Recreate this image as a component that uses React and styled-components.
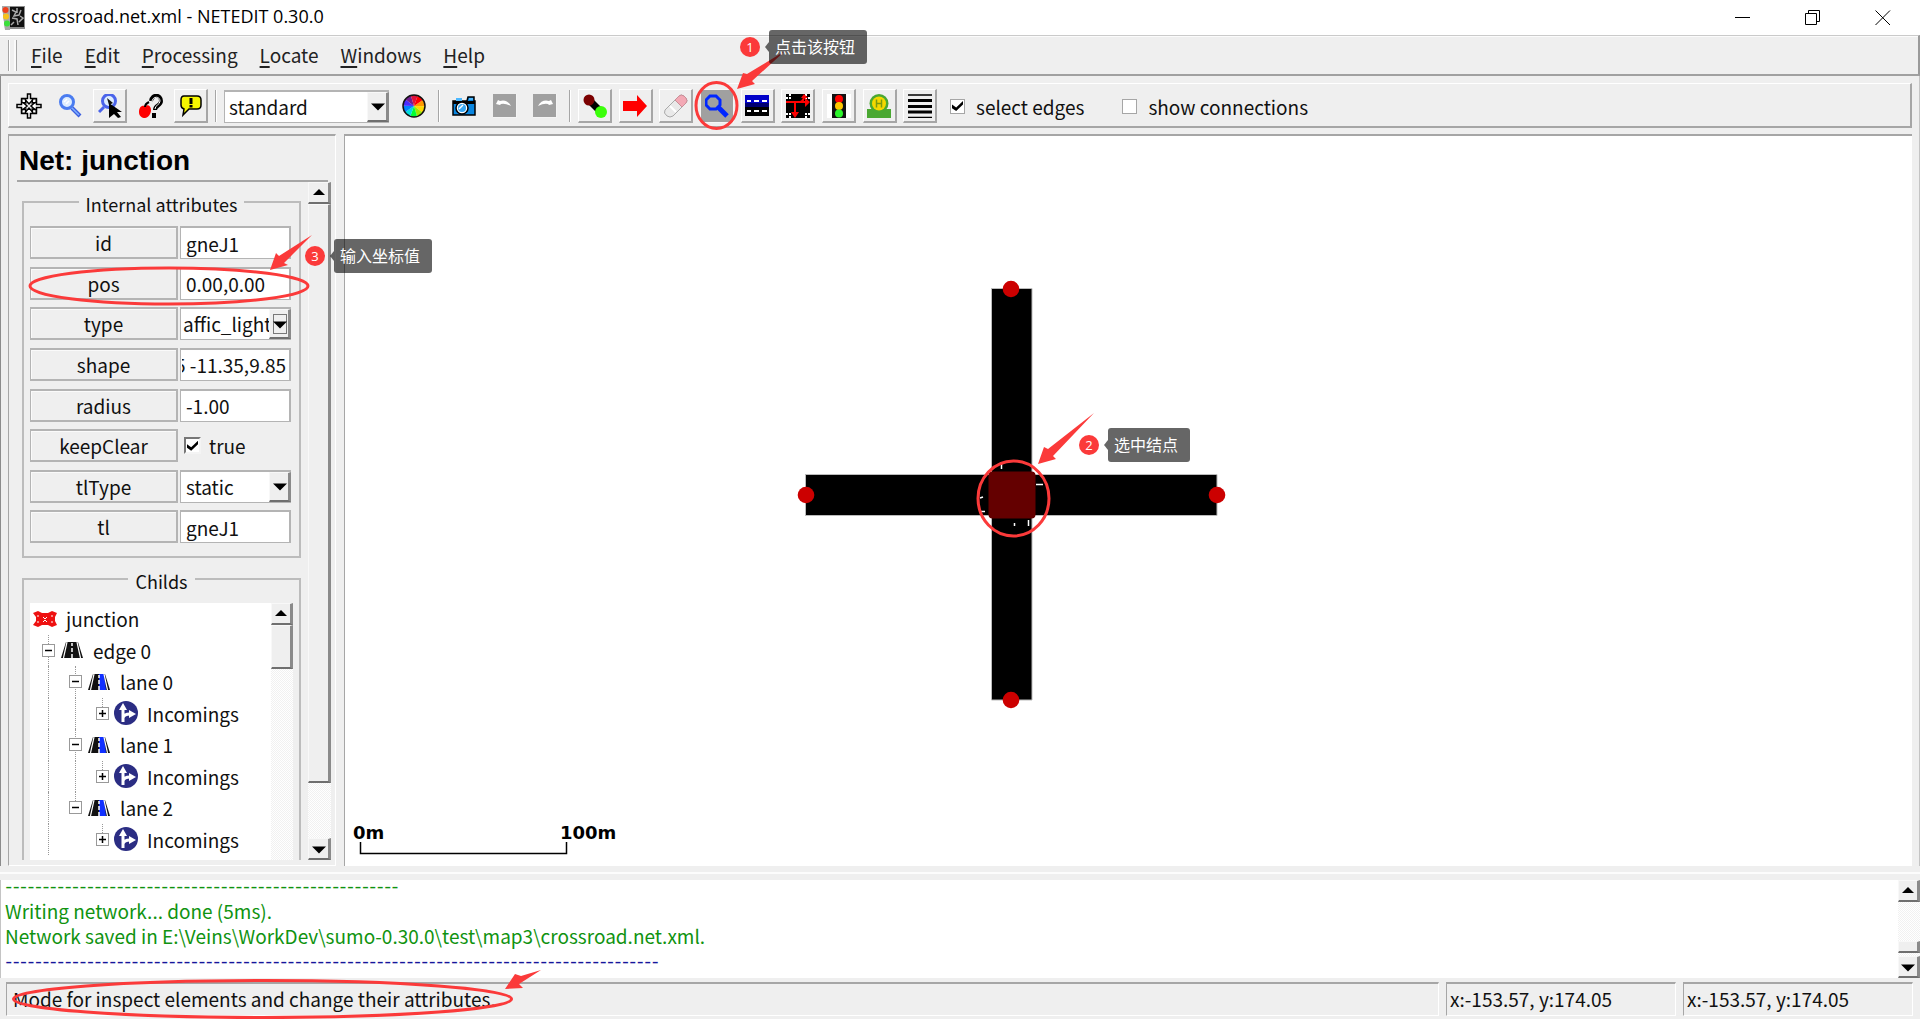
import React from 'react';
import styled, { createGlobalStyle, css } from 'styled-components';

const face = '#efefef';
const shade = '#a6a6a6';
const dark = '#6f6f6f';
const mark = '#fb3a3a';

const GlobalStyle = createGlobalStyle`
  * { box-sizing: border-box; }
  body {
    margin: 0;
    background: ${face};
    color: #111;
    font: 19px/25px 'Noto Sans CJK SC', 'Open Sans', sans-serif;
  }
  button, input, select { font: inherit; color: inherit; margin: 0; }
`;

/* ---------- shared bevels ---------- */

const raised = css`
  border: 1px solid #fff;
  border-right: 2px solid ${shade};
  border-bottom: 2px solid ${shade};
`;

const raisedDark = css`
  border: 1px solid #f8f8f8;
  border-right: 3px solid #8a8a8a;
  border-bottom: 2px solid ${dark};
`;

const sunken = css`
  border: 2px solid #b4b4b4;
  border-left-width: 1px;
  border-bottom-width: 1px;
`;

/* ---------- window ---------- */

const Window = styled.div`
  position: relative;
  display: flex;
  flex-direction: column;
  min-height: 100vh;
  overflow: hidden;
  background: ${face};
`;

const TitleBar = styled.header`
  display: flex;
  align-items: center;
  height: 35px;
  padding: 0 2px;
  background: #fff;
`;

const TitleText = styled.h1`
  flex: 1;
  margin: 0 0 0 5px;
  padding-bottom: 2px;
  font: 400 18px/25px 'Open Sans', sans-serif;
  color: #000;
`;

const WindowButton = styled.button`
  display: grid;
  place-items: center;
  width: 70px;
  height: 33px;
  padding: 0;
  border: 0;
  background: none;
`;

const MenuBar = styled.nav`
  display: flex;
  align-items: center;
  height: 41px;
  padding: 0 8px;
  border-top: 1px solid #cacaca;
  border-right: 2px solid #9a9a9a;
  border-bottom: 2px solid #a0a0a0;
  box-shadow: inset 0 1px #fbfbfb;
`;

const Grip = styled.span`
  width: 9px;
  height: 31px;
  margin-right: 3px;
  border: solid ${shade};
  border-width: 0 1px;
  box-shadow: inset 1px 0 #fff, inset -2px 0 #fafafa;
`;

const MenuButton = styled.button`
  padding: 0 11px;
  border: 0;
  background: none;
  line-height: 30px;
  color: #222;

  & > u { text-underline-offset: 3px; text-decoration-thickness: 2px; text-decoration-skip-ink: none; }
`;

/* ---------- tool bar ---------- */

const Workspace = styled.div`
  flex: 1;
  display: flex;
  flex-direction: column;
  gap: 6px;
  padding: 7px 7px 0;
  border-left: 1px solid #8c8c8c;
  border-right: 1px solid #c4c4c4;
`;

const ToolFrame = styled.div`
  display: flex;
  align-items: center;
  height: 45px;
  padding: 3px 3px 1px;
  border: 1px solid #fff;
  border-right: 2px solid ${shade};
  border-bottom: 2px solid ${shade};
`;

const ToolGroup = styled.div`
  display: grid;
  grid-template-columns: repeat(${(p) => p.$count}, 1fr);
  width: ${(p) => p.$width}px;
`;

const ToolButton = styled.button`
  display: grid;
  place-items: center;
  width: 34px;
  height: 34px;
  padding: 0;
  background: none;
  border: 0;
  ${(p) => p.$look === 'raised' && raised}
  ${(p) => p.$look === 'pressed' && css`background: #a0a0a0; border: 1px solid #f6f6f6;`}
`;

const Divider = styled.span`
  width: 2px;
  height: 32px;
  margin-right: 7px;
  background: linear-gradient(90deg, ${shade} 50%, #fff 50%);
`;

const WheelSlot = styled.div`
  margin: 0 7px 0 8px;
`;

const CheckLabel = styled.label`
  display: flex;
  align-items: center;
  gap: ${(p) => p.$gap || 11}px;
  margin-left: ${(p) => p.$lead || 0}px;
`;

const CheckBox = styled.input`
  appearance: none;
  display: grid;
  place-items: center;
  width: ${(p) => (p.$deep ? 17 : 15)}px;
  height: ${(p) => (p.$deep ? 17 : 15)}px;
  background: #fff;
  border: 1px solid ${shade};
  ${(p) => p.$deep && css`border: 2px solid #777; border-right-color: #f4f4f4; border-bottom-color: #f4f4f4;`}

  &:checked::after {
    content: '';
    width: 11px;
    height: 10px;
    background: #000;
    clip-path: polygon(0 35%, 38% 65%, 100% 0, 100% 35%, 38% 100%, 0 72%);
  }
`;

/* ---------- combo box ---------- */

const ComboBox = styled.div`
  display: grid;
  grid-template-columns: 1fr 22px;
  width: ${(p) => p.$width}px;
  height: 33px;
  background: #fff;
  ${sunken}
  border-right-width: 0;
`;

const ComboSelect = styled.select`
  grid-area: 1 / 1 / 2 / 3;
  appearance: none;
  min-width: 0;
  width: 100%;
  padding: 0 0 0 ${(p) => p.$pad}px;
  border: 0;
  outline: 0;
  background: transparent;
  line-height: 28px;
`;

const ComboArrow = styled.span`
  grid-area: 1 / 2;
  display: grid;
  place-items: center;
  padding-left: 2px;
  background: ${face};
  pointer-events: none;
  ${raisedDark}
`;

/* ---------- side panel ---------- */

const Main = styled.main`
  flex: 1;
  display: grid;
  grid-template-columns: 328px 1fr;
  gap: 8px;
`;

const Side = styled.aside`
  display: flex;
  flex-direction: column;
  padding: 0 4px 5px 8px;
  border: 1px solid ${shade};
  border-top-width: 2px;
  border-right-color: #fff;
  border-bottom-color: #fff;
`;

const SideTitle = styled.h2`
  margin: 0 3px 0 0;
  padding: 8px 0 2px 2px;
  border-bottom: 2px solid ${shade};
  font: bold 28px/34px 'Liberation Sans', Arial, sans-serif;
  color: #000;
`;

const SideBody = styled.div`
  flex: 1 1 0px;
  display: flex;
  justify-content: space-between;
  min-height: 640px;
  overflow: hidden;
`;

const Groups = styled.div`
  display: flex;
  flex-direction: column;
  gap: 7px;
  width: 284px;
  padding: 6px 0 0 5px;
  overflow: hidden;
`;

const Group = styled.fieldset`
  flex: none;
  min-width: 0;
  margin: 0;
  padding: 10px 6px 5px;
  border: 2px solid #bcbcbc;
`;

const GroupTitle = styled.legend`
  margin: 0 auto;
  padding: 4px 7px 0;
  font-size: 18px;
  line-height: 24px;
`;

const Fields = styled.div`
  display: grid;
  grid-template-rows: repeat(8, 1fr);
  height: 325px;
`;

const Field = styled.div`
  display: grid;
  grid-template-columns: 148px 111px;
  gap: 2px;
  height: 33px;
`;

const FieldName = styled.label`
  text-align: center;
  line-height: 29px;
  border: 2px solid #b4b4b4;
  border-left-width: 1px;
  box-shadow: inset 1px 1px #fafafa;
`;

const FieldInput = styled.input`
  min-width: 0;
  width: 111px;
  padding: 0 3px;
  padding-left: ${(p) => (p.$scrolled ? 1 : 5)}px;
  text-indent: ${(p) => (p.$scrolled ? -7 : 0)}px;
  line-height: 29px;
  background: #fff;
  outline: 0;
  ${sunken}
`;

/* ---------- scroll bars ---------- */

const Scroll = styled.div`
  flex: none;
  display: flex;
  flex-direction: column;
  width: ${(p) => p.$width || 23}px;
  background: repeating-conic-gradient(#fff 0 25%, #f1f1f1 0 50%) 0 0 / 2px 2px;
`;

const ScrollButton = styled.button`
  display: grid;
  place-items: center;
  height: 22px;
  padding: 0;
  background: ${face};
  ${raisedDark}
`;

const ScrollSpace = styled.span`
  flex: ${(p) => p.$grow} 0 0;
`;

const ScrollThumb = styled.span`
  flex: ${(p) => p.$grow} 0 0;
  background: ${face};
  ${raisedDark}
`;

/* ---------- tree ---------- */

const TreeBox = styled.div`
  display: flex;
  height: 262px;
  background: #fff;
`;

const TreeList = styled.ul`
  flex: 1;
  display: grid;
  grid-template-rows: repeat(8, 1fr);
  height: 252px;
  margin: 0;
  padding: 0;
  list-style: none;
`;

const TreeRow = styled.li`
  position: relative;
  display: flex;
  align-items: center;
  padding-left: ${(p) => (p.$level ? 12 + 27 * (p.$level - 1) : 3)}px;
`;

const Guide = styled.span`
  position: absolute;
  left: ${(p) => 18 + 27 * (p.$level - 1)}px;
  top: 0;
  height: ${(p) => (p.$short ? '30%' : '100%')};
  border-left: 1px dotted #999;
`;

const Toggle = styled.button`
  position: relative;
  display: grid;
  place-items: center;
  width: 13px;
  height: 13px;
  margin-right: 5px;
  padding: 0;
  background: #fff;
  border: 1px solid #999;
`;

const TreeIcon = styled.span`
  display: grid;
  place-items: center;
  width: 24px;
  margin-right: 9px;
`;

/* ---------- canvas ---------- */

const Canvas = styled.section`
  display: flex;
  background: #fff;
  border: 1px solid ${shade};
  border-top-width: 2px;
  border-right: 0;
  border-bottom: 0;
`;

const Drawing = styled.svg`
  flex: 1;
  width: 100%;
  font: bold 18px 'DejaVu Sans', sans-serif;
`;

/* ---------- log and status ---------- */

const Splitter = styled.div`
  height: 14px;
  background: linear-gradient(${face} 6px, #fcfcfc 6px, #fcfcfc 8px, ${face} 8px);
`;

const Log = styled.section`
  display: flex;
  height: 98px;
  background: #fff;
  border-left: 1px solid #c4c4c4;
`;

const LogText = styled.div`
  flex: 1;
  display: flex;
  flex-direction: column;
  justify-content: flex-end;
  padding: 0 4px 5px;
`;

const LogLine = styled.p`
  flex: none;
  margin: 0;
  white-space: pre;
  color: ${(p) => (p.$tone === 'blue' ? '#16169c' : '#109310')};
  ${(p) => p.$rule && css`font-family: Lato, 'Open Sans', sans-serif; font-size: 20px;`}
`;

const StatusBar = styled.footer`
  display: grid;
  grid-template-columns: 1fr 230px 230px;
  gap: 7px;
  height: 41px;
  padding: 4px 7px 3px 6px;
`;

const StatusCell = styled.div`
  padding-left: ${(p) => (p.$wide ? 6 : 3)}px;
  border: 1px solid #fff;
  border-top: 2px solid ${shade};
  border-left: 1px solid ${shade};
  line-height: 29px;
  white-space: nowrap;
`;

/* ---------- annotations ---------- */

const Marks = styled.svg`
  position: absolute;
  left: 0;
  top: 0;
  width: 100%;
  height: 100%;
  pointer-events: none;
`;

const Callout = styled.div`
  position: absolute;
  left: ${(p) => p.$x}px;
  top: ${(p) => p.$y}px;
  display: flex;
  align-items: center;
  font: 16px/34px 'Noto Sans CJK SC', sans-serif;
  color: #fff;
`;

const CalloutNumber = styled.span`
  width: 20px;
  height: 20px;
  margin-right: 5px;
  border-radius: 50%;
  background: ${mark};
  font: 13px/20px 'Open Sans', sans-serif;
  text-align: center;
`;

const CalloutText = styled.span`
  display: flex;
  align-items: center;

  &::before {
    content: '';
    border: solid transparent;
    border-width: 5px 4px 5px 0;
    border-right-color: rgba(0, 0, 0, 0.6);
  }

  & > span {
    height: 34px;
    padding: 0 12px 0 6px;
    border-radius: 3px;
    background: rgba(0, 0, 0, 0.6);
    line-height: 32px;
  }
`;

/* ---------- icons ---------- */

const Icon = ({ size = 24, children, box = 24 }) => (
  <svg width={size} height={size} viewBox={`0 0 ${box} ${box}`} aria-hidden="true">{children}</svg>
);

const AppIcon = () => (
  <Icon>
    <path d="M0 0h23v23H3z" fill="#8d8d8d" />
    <path d="M8 1h14v20H8z" fill="#111" />
    <path d="M10 4l4 2-2 4 5-1 2-5M10 12l5 1 1 6M18 10l3 2-4 4M12 16l-3 3M15 2v5" stroke="#aaa" strokeWidth="1.5" fill="none" />
    <path d="M0 0h8v24H3z" fill="#a9a9a9" />
    <circle cx="3.500" cy="4" r="3" fill="#f0401c" />
    <circle cx="4" cy="10.500" r="3" fill="#f6c21c" />
    <circle cx="5" cy="17.500" r="3" fill="#3be03b" />
  </Icon>
);

const MoveIcon = () => (
  <Icon size={26} box={26}>
    {[0, 90, 180, 270].map((a) => (
      <path key={a} transform={`rotate(${a} 13 13)`} d="M11.500 1h3v4.500h3.500l-5 5.500-5-5.500h3.500z" fill="#fff" stroke="#000" strokeWidth="1.500" />
    ))}
    {[45, 135, 225, 315].map((a) => (
      <path key={a} transform={`rotate(${a} 13 13)`} d="M13 2.500l2.500 3-2.500 3-2.500-3z" fill="#fff" stroke="#000" strokeWidth="1.500" />
    ))}
  </Icon>
);

const ZoomIcon = () => (
  <Icon>
    <path d="M14 14l8 8" stroke="#3c5fe0" strokeWidth="4" />
    <path d="M14 14l7 7" stroke="#7fb0ff" strokeWidth="1.500" />
    <circle cx="9" cy="8" r="6.500" fill="#dcecff" stroke="#4a7cf0" strokeWidth="3" />
    <path d="M6 8l3-3M8 10l3-3" stroke="#fff" strokeWidth="1.500" />
  </Icon>
);

const ZoomPickIcon = () => (
  <Icon>
    <path d="M6 13l-5 5" stroke="#4a63ea" strokeWidth="3" />
    <circle cx="11" cy="7" r="6.500" fill="#dcecff" stroke="#4a63ea" strokeWidth="3" />
    <path d="M9 4l6 5-4 2z" fill="#111" />
    <path d="M11 9l13 9h-5l4 5-3 1-4-4-5 4z" fill="#000" />
  </Icon>
);

const HelpIcon = () => (
  <Icon>
    <path d="M12 7c1-7 10-7 10 0 0 5-6 4-6 9" fill="none" stroke="#000" strokeWidth="4" />
    <path d="M13 7c1-5 8-5 8 0 0 4-5 4-5 8" fill="none" stroke="#fff" strokeWidth="1" />
    <path d="M13 19h4v5h-4z" fill="#000" />
    <path d="M6 12c3-2 6 0 6 4s-3 8-6 8-6-2-6-6 2-7 6-6z" fill="#f00" />
    <path d="M6 13c0-3 2-4 4-5" stroke="#000" strokeWidth="2" fill="none" />
  </Icon>
);

const TipIcon = () => (
  <Icon>
    <path d="M5 2h13q4 0 4 4v5q0 4-4 4h-8l-6 6 1-6q-3-1-3-4V6q0-4 3-4z" fill="#f6f600" stroke="#000" strokeWidth="1.500" />
    <path d="M12 4v6M12 11v2.500" stroke="#000" strokeWidth="3" />
  </Icon>
);

const wheel = ['#ff9a00', '#ffd800', '#9be800', '#0f3', '#0dd', '#0084ff', '#4a2bff', '#701a90', '#e0103a', '#f00'];
const WheelIcon = () => (
  <Icon>
    {wheel.map((c, i) => {
      const p = (k) => {
        const a = (k / wheel.length) * Math.PI * 2 - 0.6;
        return `${12 + 11 * Math.cos(a)} ${12 + 11 * Math.sin(a)}`;
      };
      return <path key={c} d={`M12 12L${p(i)}A11 11 0 0 1 ${p(i + 1)}z`} fill={c} />;
    })}
    <circle cx="12" cy="12" r="11" fill="none" stroke="#111" strokeWidth="1.500" />
  </Icon>
);

const CameraIcon = () => (
  <Icon>
    <path d="M1 7h14l1-4h6v4h1v14H1z" fill="#0a86e0" stroke="#000" strokeWidth="1.500" />
    <path d="M1 7h22v3H1z" fill="#000" />
    <path d="M4 4h6v3H4zM17 4h4v2h-4z" fill="#4bb8ff" />
    <circle cx="10" cy="14" r="6" fill="#fff" stroke="#000" strokeWidth="1.500" />
    <circle cx="10" cy="14" r="4" fill="#39a7f2" />
    <path d="M7 15l4-4" stroke="#fff" strokeWidth="1.500" />
  </Icon>
);

const HistoryIcon = ({ redo }) => (
  <Icon>
    <path d="M0 0h24v24H0z" fill="#a0a0a0" />
    <path d="M0 24h24V0" fill="none" stroke="#f4f4f4" strokeWidth="2" />
    <path transform={redo ? 'translate(23 0) scale(-1 1)' : undefined} d="M3 10l2-4 2 1q7-2 11 5-6-3-10-2l-1 1z" fill="#fff" />
  </Icon>
);

const CreateIcon = () => (
  <Icon>
    <path d="M8 8l9 9" stroke="#000" strokeWidth="7" />
    <circle cx="6" cy="6" r="5.500" fill="#7b0000" />
    <circle cx="18" cy="18" r="6" fill="#3bff0a" />
  </Icon>
);

const EdgeIcon = () => <Icon><path d="M0 7h14V1l10 11-10 11v-6H0z" fill="#f00" /></Icon>;

const EraserIcon = () => (
  <Icon>
    <path d="M1 16L15 2q2-2 5 0l2 2q2 3 0 5L9 22q-3 2-6 0-4-3-2-6z" fill="#e9e9e9" stroke="#a9a9a9" />
    <path d="M11 6l4-4q2-2 5 0l2 2q2 3 0 5l-4 4z" fill="#f3a9b5" stroke="#c98f98" />
    <path d="M6 12l6 6" stroke="#fff" strokeWidth="2" />
  </Icon>
);

const InspectIcon = () => (
  <Icon>
    <path d="M5 2h6l4 4v5l-4 4H5l-4-4V6z" fill="none" stroke="#0026ff" strokeWidth="3" />
    <path d="M13 13l9 9" stroke="#0026ff" strokeWidth="5" />
  </Icon>
);

const RoadIcon = () => (
  <Icon>
    <path d="M0 1h24v12H0z" fill="#0000c8" />
    <path d="M0 9h24v4H0z" fill="#000070" />
    <path d="M0 13h24v9H0z" fill="#000" />
    <path d="M2 7h4M9 7h5M17 7h5M2 17h4M9 17h5M17 17h5" stroke="#fff" strokeWidth="2" />
  </Icon>
);

const ConnectIcon = () => (
  <Icon>
    <path d="M0 0h24v24H0z" fill="#000" />
    <path d="M0 4h4V0M20 0v4h4M0 20h4v4M24 20h-4v4" fill="none" stroke="#fff" strokeWidth="2" strokeDasharray="2 1" />
    <path d="M0 8h22M9 8v13M14 8q4-1 4-6" stroke="#f00" strokeWidth="2" fill="none" />
    <path d="M19 4l5 4-5 5zM5 18h8l-4 6zM15 4l3-4 4 4z" fill="#f00" />
  </Icon>
);

const LightIcon = () => (
  <Icon>
    <path d="M0 0h24v24H0z" fill="#fff" />
    <path d="M5 0h14v24H5z" fill="#111" />
    <circle cx="12" cy="5" r="4" fill="#f00" />
    <circle cx="12" cy="12" r="4" fill="#ffc800" />
    <circle cx="12" cy="19.500" r="4" fill="#2bf52b" />
  </Icon>
);

const StopIcon = () => (
  <Icon>
    <path d="M0 15h24v9H0z" fill="#4aa832" />
    <circle cx="12" cy="9.500" r="9.500" fill="#4aa832" />
    <circle cx="12" cy="9.500" r="7" fill="#f5d800" />
    <path d="M9.500 5.500v8M14.500 5.500v8M9.500 9.500h5" stroke="#7a9a10" strokeWidth="1.500" />
  </Icon>
);

const CrossingIcon = () => (
  <Icon>
    <path d="M0 1h24M0 23.500h24" stroke="#000" strokeWidth="1.500" />
    <path d="M0 6.500h24M0 12.500h24M0 18h24" stroke="#000" strokeWidth="3" />
  </Icon>
);

const Triangle = ({ up, focused }) => (
  <svg width="16" height="20" viewBox="0 0 16 20" aria-hidden="true">
    <path d={up ? 'M8 6l6 6H2z' : 'M8 14.500L1 7.500h14z'} fill="#000" />
    {focused && <rect x="1.500" y="0.500" width="13" height="19" fill="none" stroke="#000" strokeDasharray="1 1" />}
  </svg>
);

const JunctionIcon = () => (
  <svg width="24" height="16" viewBox="0 0 24 16" aria-hidden="true">
    <path d="M0 2l5-2 4 2h6l4-2 5 2-2 4v4l2 4-5 2-4-2H9l-4 2-5-2 3-4V6z" fill="#ee1111" />
    <path d="M10 6l2 2 2-2M10 11l2-2 2 2M4 5h2M18 5h2M4 11h2M18 11h2" stroke="#fff" strokeWidth="1" fill="none" />
  </svg>
);

const LaneIcon = ({ blue }) => (
  <svg width="22" height="16" viewBox="0 0 22 16" aria-hidden="true">
    <path d="M5 0h12l5 16H0z" fill="#111" />
    {blue && <path d="M11 0h5l2 16h-7z" fill="#1030ff" />}
    <path d="M6 0L2.500 16M16 0l3.500 16" stroke="#fff" strokeWidth="1.200" />
    <path d="M11 1v3M11 6v4M11 12v4" stroke="#fff" strokeWidth="1.500" />
  </svg>
);

const IncomingIcon = () => (
  <Icon>
    <circle cx="12" cy="12" r="12" fill="#2b2d83" />
    <path d="M9 21V8M9 17q1-4 7-4" stroke="#fff" strokeWidth="3" fill="none" />
    <path d="M9 2l4 7H5zM15 9l7 4-7 4z" fill="#fff" />
  </Icon>
);

/* ---------- data ---------- */

const menus = ['File', 'Edit', 'Processing', 'Locate', 'Windows', 'Help'];

const viewTools = [
  ['Recenter', MoveIcon],
  ['Zoom', ZoomIcon],
  ['Zoom style', ZoomPickIcon, 'raised'],
  ['Locate help', HelpIcon],
  ['Tooltips', TipIcon, 'raised'],
];

const modes = [
  ['Create edge', CreateIcon],
  ['Move', EdgeIcon],
  ['Delete', EraserIcon],
  ['Inspect', InspectIcon, 'pressed'],
  ['Select', RoadIcon],
  ['Connect', ConnectIcon],
  ['Traffic light', LightIcon],
  ['Additional', StopIcon],
  ['Crossing', CrossingIcon],
];

const fields = [
  { name: 'id', value: 'gneJ1' },
  { name: 'pos', value: '0.00,0.00' },
  { name: 'type', value: 'affic_light', kind: 'combo', focused: true },
  { name: 'shape', value: '5 -11.35,9.85', scrolled: true },
  { name: 'radius', value: '-1.00' },
  { name: 'keepClear', value: 'true', kind: 'check' },
  { name: 'tlType', value: 'static', kind: 'combo' },
  { name: 'tl', value: 'gneJ1' },
];

const tree = [
  { level: 0, text: 'junction', icon: <JunctionIcon /> },
  { level: 1, text: 'edge 0', icon: <LaneIcon />, open: true, lines: [1] },
  { level: 2, text: 'lane 0', icon: <LaneIcon blue />, open: true, lines: [1, 2] },
  { level: 3, text: 'Incomings', icon: <IncomingIcon />, lines: [1, 2] },
  { level: 2, text: 'lane 1', icon: <LaneIcon blue />, open: true, lines: [1, 2] },
  { level: 3, text: 'Incomings', icon: <IncomingIcon />, lines: [1, 2] },
  { level: 2, text: 'lane 2', icon: <LaneIcon blue />, open: true, lines: [1] },
  { level: 3, text: 'Incomings', icon: <IncomingIcon />, lines: [1] },
];

/* ---------- parts ---------- */

const Tools = ({ items, width, look }) => (
  <ToolGroup $count={items.length} $width={width}>
    {items.map(([name, Glyph, own]) => (
      <ToolButton key={name} type="button" aria-label={name} $look={own || look}><Glyph /></ToolButton>
    ))}
  </ToolGroup>
);

const Combo = ({ id, label, value, width, pad, focused }) => (
  <ComboBox $width={width}>
    <ComboSelect id={id} aria-label={label} defaultValue={value} $pad={pad}>
      <option>{value}</option>
    </ComboSelect>
    <ComboArrow><Triangle focused={focused} /></ComboArrow>
  </ComboBox>
);

const FieldValue = ({ field }) => {
  const id = `field-${field.name}`;
  if (field.kind === 'combo') {
    return <Combo id={id} value={field.value} width={111} pad={field.focused ? 2 : 5} focused={field.focused} />;
  }
  if (field.kind === 'check') {
    return (
      <CheckLabel $gap={8} $lead={4}>
        <CheckBox id={id} type="checkbox" defaultChecked $deep />
        {field.value}
      </CheckLabel>
    );
  }
  return <FieldInput id={id} defaultValue={field.value} $scrolled={field.scrolled} />;
};

const ScrollBar = ({ width, before = 0, thumb, after, end = true }) => (
  <Scroll $width={width}>
    <ScrollButton type="button" aria-label="Scroll up"><Triangle up /></ScrollButton>
    <ScrollSpace $grow={before} />
    <ScrollThumb $grow={thumb} />
    <ScrollSpace $grow={after} />
    {end && <ScrollButton type="button" aria-label="Scroll down"><Triangle /></ScrollButton>}
  </Scroll>
);

const RoadMap = () => (
  <Drawing role="img" aria-label="Road network">
    <g transform="translate(-345 -136)">
      <path d="M991.500 288.500h40.500v411.500h-40.500zM805.500 474.500h411.500v41h-411.500z" stroke="#bbb" fill="#000" />
      <path d="M992 473h39v45h-39z" fill="#000" />
      <path d="M1001.500 464v5M1028.500 520v6M1014.500 523v3M1036 484.500h7M980 498l3-1M981 511.500h4" stroke="#fff" strokeWidth="1.500" />
      <rect x="988.500" y="471.500" width="47" height="47" rx="4" fill="#640000" />
      {[[1011, 289], [1011, 700], [806, 495], [1217, 495]].map(([x, y]) => (
        <circle key={`${x}-${y}`} cx={x} cy={y} r="8.300" fill="#c00" />
      ))}
      <path d="M360.500 842v11.500h206V842" fill="none" stroke="#000" strokeWidth="1.500" />
      <text x="353" y="839">0m</text>
      <text x="560" y="839">100m</text>
    </g>
  </Drawing>
);

const Annotations = () => (
  <>
    <Marks aria-hidden="true">
      <g fill="none" stroke={mark} strokeWidth="3">
        <ellipse cx="716.500" cy="105.500" rx="20.500" ry="23" />
        <ellipse cx="1013.500" cy="498.500" rx="35.500" ry="37.500" />
        <ellipse cx="169" cy="286" rx="139" ry="18" />
        <ellipse cx="262.500" cy="999" rx="249" ry="18.500" />
      </g>
      <g fill={mark}>
        <path d="M737 89l6-16 4 1 38-23-33 30 3 3z" />
        <path d="M1038 464l6-17 4 2 46-36-41 43 3 3z" />
        <path d="M270 270l6-17 3 3 33-21-28 28 4 2z" />
        <path d="M505 989l10-15 6 2 20-6-22 14 4 4z" />
      </g>
    </Marks>
    {[[1, '点击该按钮', 740, 30], [2, '选中结点', 1079, 428], [3, '输入坐标值', 305, 239]].map(([n, text, x, y]) => (
      <Callout key={n} $x={x} $y={y}>
        <CalloutNumber>{n}</CalloutNumber>
        <CalloutText><span>{text}</span></CalloutText>
      </Callout>
    ))}
  </>
);

export default function App() {
  return (
    <Window>
      <GlobalStyle />
      <TitleBar>
        <AppIcon />
        <TitleText>crossroad.net.xml - NETEDIT 0.30.0</TitleText>
        <WindowButton type="button" aria-label="Minimize">
          <svg width="16" height="16"><path d="M0 7.500h15" stroke="#000" /></svg>
        </WindowButton>
        <WindowButton type="button" aria-label="Restore">
          <svg width="16" height="16"><path d="M.5 3.500h11v11H.5zM3.500 3V.5h11v11H12" stroke="#000" fill="none" /></svg>
        </WindowButton>
        <WindowButton type="button" aria-label="Close">
          <svg width="16" height="16"><path d="M.5 .5l14.500 14.500M15 .5L.5 15" stroke="#000" /></svg>
        </WindowButton>
      </TitleBar>

      <MenuBar>
        <Grip />
        {menus.map((m) => (
          <MenuButton key={m} type="button"><u>{m[0]}</u>{m.slice(1)}</MenuButton>
        ))}
      </MenuBar>

      <Workspace>
        <ToolFrame>
          <Tools items={viewTools} width={203} />
          <Divider />
          <Combo label="Colouring scheme" value="standard" width={165} pad={4} />
          <WheelSlot>
            <ToolButton type="button" aria-label="Edit colours"><WheelIcon /></ToolButton>
          </WheelSlot>
          <Divider />
          <ToolGroup $count={3} $width={122}>
            <ToolButton type="button" aria-label="Snapshot"><CameraIcon /></ToolButton>
            <ToolButton type="button" aria-label="Undo"><HistoryIcon /></ToolButton>
            <ToolButton type="button" aria-label="Redo"><HistoryIcon redo /></ToolButton>
          </ToolGroup>
          <Divider />
          <Tools items={modes} width={366} look="raised" />
          <CheckLabel $lead={6}><CheckBox type="checkbox" defaultChecked />select edges</CheckLabel>
          <CheckLabel $lead={38}><CheckBox type="checkbox" />show connections</CheckLabel>
        </ToolFrame>

        <Main>
          <Side>
            <SideTitle>Net: junction</SideTitle>
            <SideBody>
              <Groups>
                <Group>
                  <GroupTitle>Internal attributes</GroupTitle>
                  <Fields>
                    {fields.map((f) => (
                      <Field key={f.name}>
                        <FieldName htmlFor={`field-${f.name}`}>{f.name}</FieldName>
                        <FieldValue field={f} />
                      </Field>
                    ))}
                  </Fields>
                </Group>
                <Group>
                  <GroupTitle>Childs</GroupTitle>
                  <TreeBox>
                    <TreeList>
                      {tree.map((row, i) => (
                        <TreeRow key={i} $level={row.level}>
                          {row.lines?.map((l) => <Guide key={l} $level={l} />)}
                          {row.level > 1 && !row.lines.includes(row.level) && <Guide $level={row.level} $short />}
                          {row.level > 0 && (
                            <Toggle type="button" aria-label={row.open ? 'Collapse' : 'Expand'}>
                              <svg width="9" height="9"><path d={row.open ? 'M1 4.500h7' : 'M1 4.500h7M4.500 1v7'} stroke="#000" strokeWidth="1.500" /></svg>
                            </Toggle>
                          )}
                          <TreeIcon>{row.icon}</TreeIcon>
                          {row.text}
                        </TreeRow>
                      ))}
                    </TreeList>
                    <ScrollBar width={22} thumb={42} after={198} end={false} />
                  </TreeBox>
                </Group>
              </Groups>
              <ScrollBar thumb={578} after={55} />
            </SideBody>
          </Side>
          <Canvas><RoadMap /></Canvas>
        </Main>
      </Workspace>

      <Splitter />

      <Log>
        <LogText>
          <LogLine $rule>{'-'.repeat(53)}</LogLine>
          <LogLine>Writing network... done (5ms).</LogLine>
          <LogLine>{'Network saved in E:\\Veins\\WorkDev\\sumo-0.30.0\\test\\map3\\crossroad.net.xml.'}</LogLine>
          <LogLine $rule $tone="blue">{'-'.repeat(88)}</LogLine>
        </LogText>
        <ScrollBar width={22} before={41} thumb={10} after={3} />
      </Log>

      <StatusBar>
        <StatusCell $wide>Mode for inspect elements and change their attributes.</StatusCell>
        <StatusCell>x:-153.57, y:174.05</StatusCell>
        <StatusCell>x:-153.57, y:174.05</StatusCell>
      </StatusBar>

      <Annotations />
    </Window>
  );
}
